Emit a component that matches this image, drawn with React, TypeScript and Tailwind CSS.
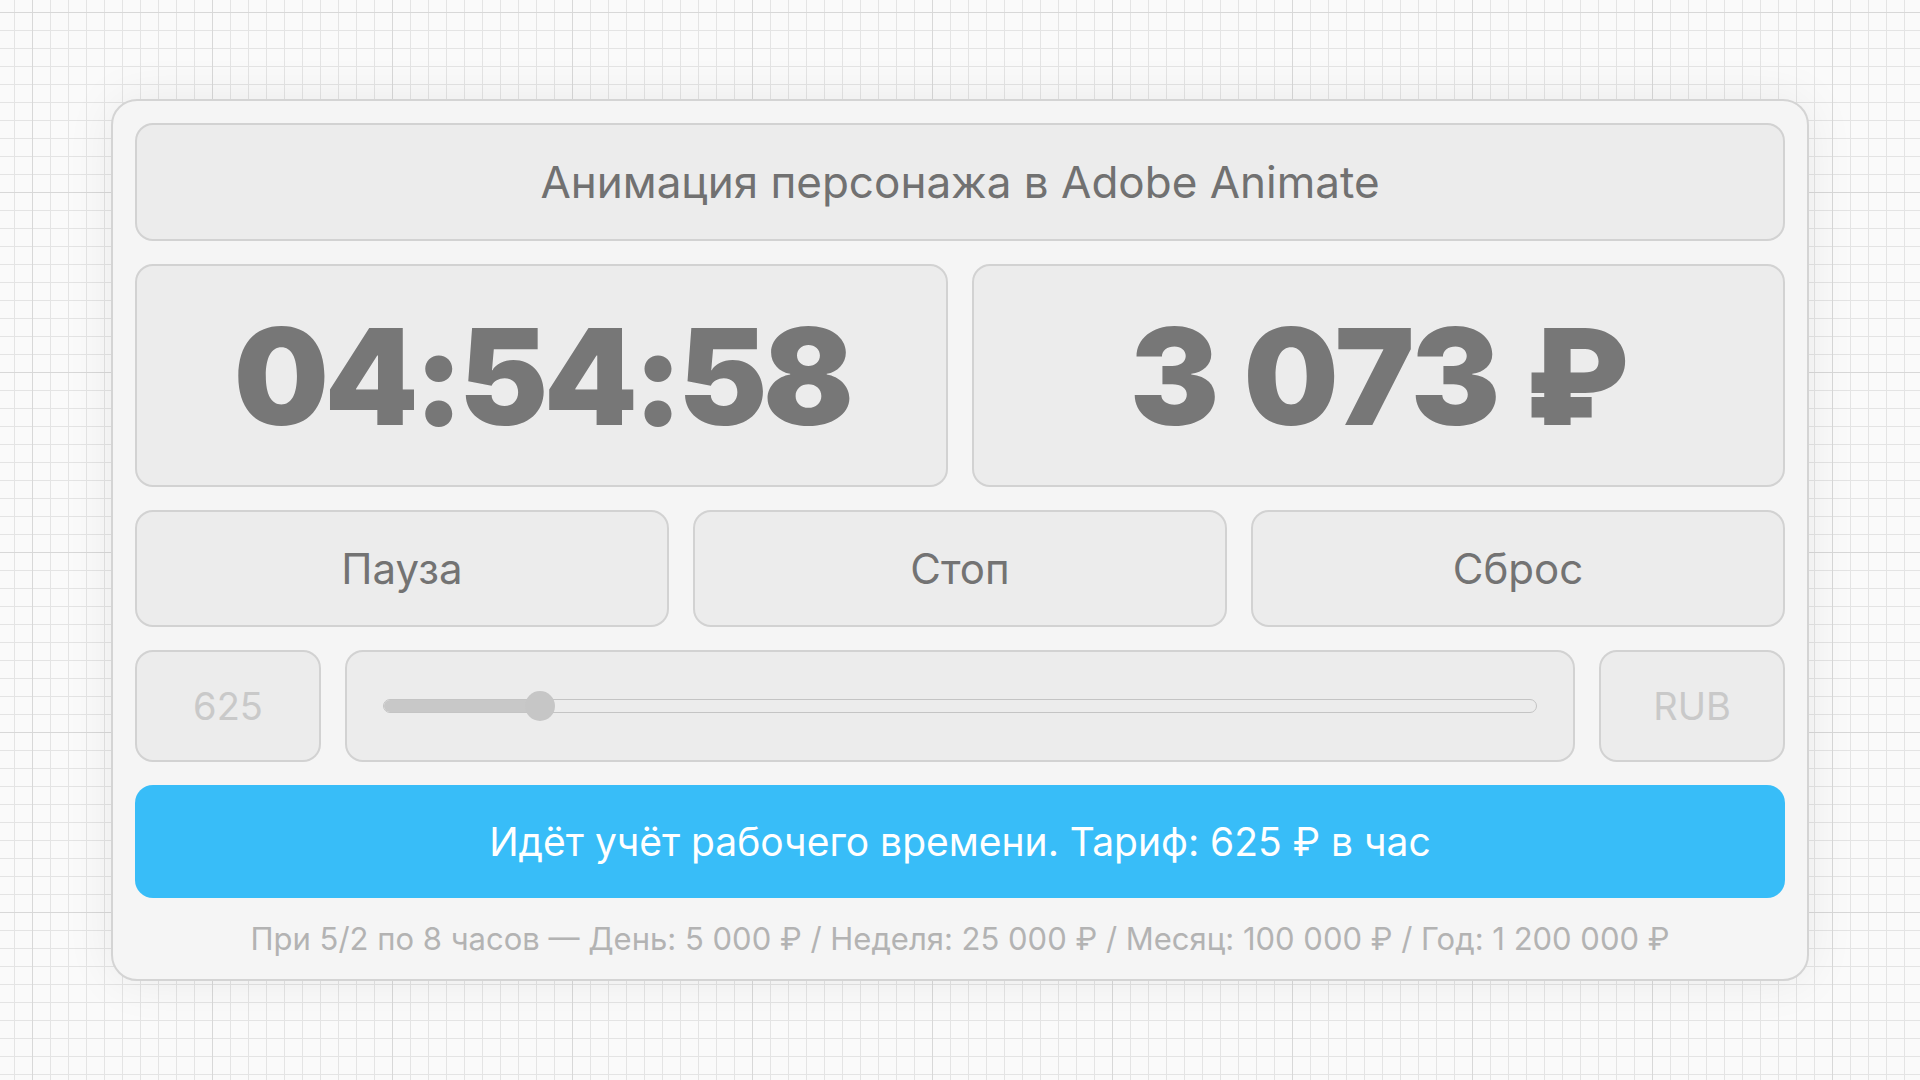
// Work-time tracker card: title, timer, earned sum, controls, rate slider.

const box =
  "rounded-[18px] border-2 border-[#d2d2d2] bg-[#ececec] flex items-center justify-center";

const sans = "font-['Inter','Noto_Sans',sans-serif]";

const stats = "При 5/2 по 8 часов — День: 5 000 ₽ / Неделя: 25 000 ₽ / Месяц: 100 000 ₽ / Год: 1 200 000 ₽";

export default function App() {
  return (
    <div
      className={`${sans} flex min-h-screen w-full items-center justify-center bg-[#fafafa] [background-image:linear-gradient(to_right,#d8d8d8_1px,transparent_1px),linear-gradient(to_bottom,#d8d8d8_1px,transparent_1px),linear-gradient(to_right,#e4e4e4_1px,transparent_1px),linear-gradient(to_bottom,#e4e4e4_1px,transparent_1px)] [background-size:180px_180px,180px_180px,18px_18px,18px_18px] [background-position:32px_12px]`}
    >
      <div className="flex w-[1698px] flex-col gap-y-[23px] rounded-[26px] border-2 border-[#d4d4d4] bg-[#f5f5f5] p-[22px] shadow-[0_0_50px_rgba(0,0,0,0.07)]">
        <div className={`${box} h-[118px]`}>
          <span className="text-[44px] leading-none text-[#717171]">
            Анимация персонажа в Adobe Animate
          </span>
        </div>

        <div className="grid grid-cols-2 gap-x-6">
          <BigValue value="04:54:58" tracking="tracking-[-0.035em]" />
          <BigValue value="3 073 ₽" tracking="tracking-[-0.01em]" />
        </div>

        <div className="grid grid-cols-3 gap-x-6">
          {["Пауза", "Стоп", "Сброс"].map((label) => (
            <button key={label} className={`${box} h-[117px]`}>
              <span className="text-[42px] leading-none text-[#737373]">{label}</span>
            </button>
          ))}
        </div>

        <div className="flex h-[112px] gap-x-6">
          <div className={`${box} w-[186px] shrink-0`}>
            <span className="text-[38px] leading-none text-[#c9c9c9]">625</span>
          </div>
          <div className={`${box} flex-1 px-[36px]`}>
            <RateSlider />
          </div>
          <div className={`${box} w-[186px] shrink-0`}>
            <span className="text-[38px] leading-none text-[#c9c9c9]">RUB</span>
          </div>
        </div>

        <div className="flex h-[113px] items-center justify-center rounded-[18px] bg-[#38bdf8]">
          <span className="text-[39px] leading-none text-white">
            Идёт учёт рабочего времени. Тариф: 625 ₽ в час
          </span>
        </div>

        <p className="text-center text-[31px] leading-[36px] text-[#b3b3b3]">{stats}</p>
      </div>
    </div>
  );
}

function BigValue({ value, tracking }: { value: string; tracking: string }) {
  return (
    <div className="rounded-[18px] border-2 border-[#d2d2d2] bg-[#ececec] flex h-[223px] items-center justify-center">
      <span className={`text-[134px] font-black leading-none text-[#777777] ${tracking}`}>
        {value}
      </span>
    </div>
  );
}

function RateSlider() {
  return (
    <div className="relative h-[14px] w-full rounded-full border border-[#c4c4c4] bg-[#ececec]">
      <div className="h-full w-[156px] rounded-full bg-[#c8c8c8]" />
      <span
        aria-hidden="true"
        className="absolute left-[141px] top-1/2 block h-[30px] w-[30px] -translate-y-1/2 rounded-full bg-[#c6c6c6]"
      />
    </div>
  );
}
